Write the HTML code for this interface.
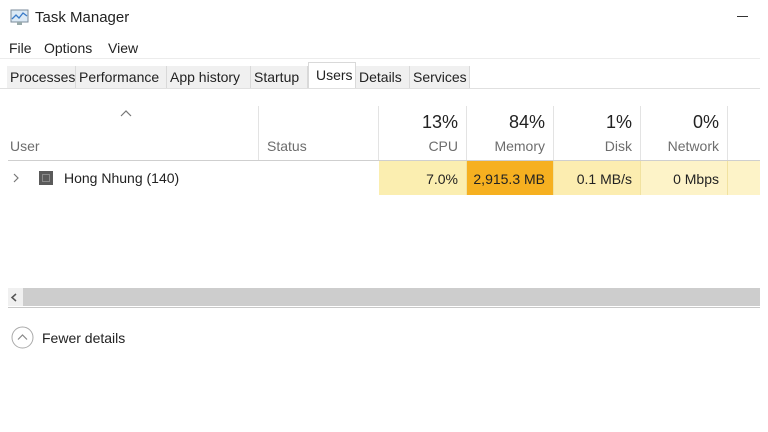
<!DOCTYPE html>
<html><head><meta charset="utf-8"><style>
*{margin:0;padding:0;box-sizing:border-box}
body{width:768px;height:432px;background:#fff;font-family:"Liberation Sans",sans-serif;color:#222;position:relative;overflow:hidden}
.a{position:absolute;white-space:nowrap}
.tab{position:absolute;top:66px;height:22px;background:#f0f0f0;border-right:1px solid #d9d9d9;font-size:14px;line-height:22px;padding-left:3px;color:#222}
.col{position:absolute;top:106px;height:54px;border-right:1px solid #e3e3e3}
.pct{position:absolute;right:8px;top:6px;font-size:18px;color:#222}
.lbl{position:absolute;right:8px;top:32px;font-size:14px;color:#6d6d6d}
.cell{position:absolute;top:161px;height:34px;font-size:14px;line-height:36px;text-align:right;padding-right:8px;border-right:1px solid #f1e2a0}
</style></head><body>
<svg class="a" style="left:10px;top:9px" width="20" height="18" viewBox="0 0 20 18"><rect x="1" y="1" width="17" height="12" fill="#dbe9f5" stroke="#7a8a99"/><polyline points="2,10 6,6 9,9 13,4 17,7" fill="none" stroke="#3a7bc8" stroke-width="1.3"/><rect x="7" y="13" width="5" height="3" fill="#9aa"/></svg>
<div class="a" style="left:35px;top:9px;font-size:15px">Task Manager</div>
<div class="a" style="left:737px;top:16px;width:11px;height:1px;background:#333"></div>
<div class="a" style="left:9px;top:40px;font-size:14px">File</div>
<div class="a" style="left:44px;top:40px;font-size:14px">Options</div>
<div class="a" style="left:108px;top:40px;font-size:14px">View</div>
<div class="a" style="left:0;top:58px;width:760px;height:1px;background:#ececec"></div>
<div class="tab" style="left:7px;width:69px">Processes</div>
<div class="tab" style="left:76px;width:91px">Performance</div>
<div class="tab" style="left:167px;width:84px">App history</div>
<div class="tab" style="left:251px;width:57px">Startup</div>
<div class="a" style="left:308px;top:62px;width:48px;height:27px;background:#fff;border:1px solid #d9d9d9;border-bottom:none;font-size:14px;padding-left:7px;line-height:24px">Users</div>
<div class="tab" style="left:356px;width:54px">Details</div>
<div class="tab" style="left:410px;width:60px">Services</div>
<div class="a" style="left:0;top:88px;width:760px;height:1px;background:#e0e0e0"></div>
<div class="a" style="left:356px;top:88px;width:0"></div>
<svg class="a" style="left:120px;top:110px" width="12" height="7"><polyline points="1,6 6,1 11,6" fill="none" stroke="#777" stroke-width="1.2"/></svg>
<div class="col" style="left:8px;width:251px"><div class="a" style="left:2px;top:32px;font-size:14px;color:#6d6d6d">User</div></div>
<div class="col" style="left:259px;width:120px"><div class="a" style="left:8px;top:32px;font-size:14px;color:#6d6d6d">Status</div></div>
<div class="col" style="left:379px;width:88px"><div class="pct">13%</div><div class="lbl">CPU</div></div>
<div class="col" style="left:467px;width:87px"><div class="pct">84%</div><div class="lbl">Memory</div></div>
<div class="col" style="left:554px;width:87px"><div class="pct">1%</div><div class="lbl">Disk</div></div>
<div class="col" style="left:641px;width:87px"><div class="pct">0%</div><div class="lbl">Network</div></div>
<div class="a" style="left:8px;top:160px;width:752px;height:1px;background:#cfcfcf"></div>
<svg class="a" style="left:13px;top:173px" width="7" height="10"><polyline points="1,1 5,5 1,9" fill="none" stroke="#777" stroke-width="1.2"/></svg>
<div class="a" style="left:39px;top:171px;width:14px;height:14px;background:#5a5a5a"><div style="position:absolute;left:3px;top:3px;width:8px;height:8px;border:1px solid #8a8a8a"></div></div>
<div class="a" style="left:64px;top:170px;font-size:14px">Hong Nhung (140)</div>
<div class="cell" style="left:379px;width:88px;background:#fbeeb0">7.0%</div>
<div class="cell" style="left:467px;width:87px;background:#f6b020">2,915.3 MB</div>
<div class="cell" style="left:554px;width:87px;background:#fcedb0">0.1 MB/s</div>
<div class="cell" style="left:641px;width:87px;background:#fdf3c8">0 Mbps</div>
<div class="cell" style="left:728px;width:32px;background:#fdf3c8;border:none"></div>
<div class="a" style="left:8px;top:288px;width:752px;height:18px;background:#cdcdcd"></div>
<div class="a" style="left:8px;top:288px;width:15px;height:18px;background:#f0f0f0"></div>
<svg class="a" style="left:10px;top:293px" width="8" height="9"><polyline points="6,1 2,4.5 6,8" fill="none" stroke="#555" stroke-width="1.5"/></svg>
<div class="a" style="left:8px;top:307px;width:752px;height:1px;background:#c8c8c8"></div>
<svg class="a" style="left:11px;top:326px" width="23" height="23"><circle cx="11.5" cy="11.5" r="10.5" fill="none" stroke="#aaa"/><polyline points="7,13.5 11.5,9 16,13.5" fill="none" stroke="#888" stroke-width="1.2"/></svg>
<div class="a" style="left:42px;top:330px;font-size:14px">Fewer details</div>
</body></html>
